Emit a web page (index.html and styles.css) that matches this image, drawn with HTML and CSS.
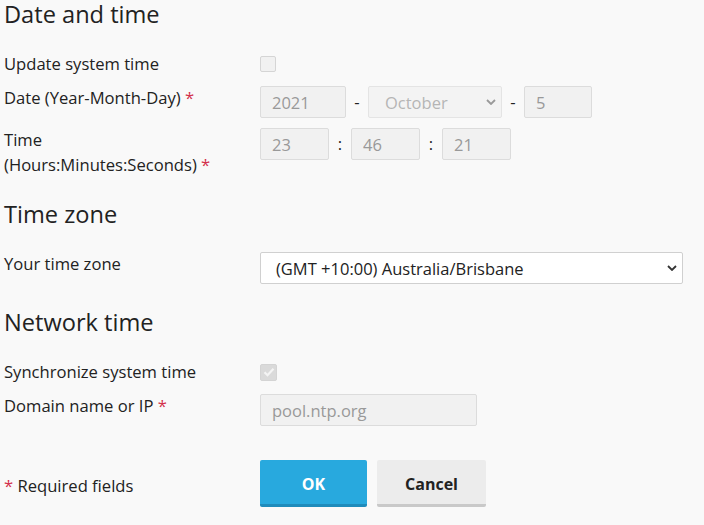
FILE: index.html
```html
<!DOCTYPE html>
<html lang="en">
<head>
<meta charset="utf-8">
<title>Date and time</title>
<link rel="stylesheet" href="styles.css">
</head>
<body>
<form class="page">
  <section class="section">
    <h2 class="section-title">Date and time</h2>
    <div class="row row-check">
      <div class="label">Update system time</div>
      <div class="field"><span class="checkbox"></span></div>
    </div>
    <div class="row">
      <div class="label">Date (Year-Month-Day) <span class="req">*</span></div>
      <div class="field">
        <input class="input w-year" type="text" value="2021" disabled>
        <span class="sep">-</span>
        <div class="select-wrap w-month">
          <select class="select" disabled><option>October</option></select>
          <svg class="chev chev-dis" width="10" height="6" viewBox="0 0 10 6"><path d="M1 1l4 4 4-4" fill="none" stroke="currentColor" stroke-width="1.8"/></svg>
        </div>
        <span class="sep">-</span>
        <input class="input w-day" type="text" value="5" disabled>
      </div>
    </div>
    <div class="row">
      <div class="label">Time<br>(Hours:Minutes:Seconds) <span class="req">*</span></div>
      <div class="field">
        <input class="input w-time" type="text" value="23" disabled>
        <span class="sep">:</span>
        <input class="input w-time" type="text" value="46" disabled>
        <span class="sep">:</span>
        <input class="input w-time" type="text" value="21" disabled>
      </div>
    </div>
  </section>
  <section class="section">
    <h2 class="section-title">Time zone</h2>
    <div class="row">
      <div class="label">Your time zone</div>
      <div class="field">
        <div class="select-wrap w-tz">
          <select class="select select-active"><option>(GMT +10:00) Australia/Brisbane</option></select>
          <svg class="chev" width="10" height="6" viewBox="0 0 10 6"><path d="M1 1l4 4 4-4" fill="none" stroke="currentColor" stroke-width="1.8"/></svg>
        </div>
      </div>
    </div>
  </section>
  <section class="section">
    <h2 class="section-title">Network time</h2>
    <div class="row row-check">
      <div class="label">Synchronize system time</div>
      <div class="field">
        <span class="checkbox checked">
          <svg width="12" height="10" viewBox="0 0 12 10"><path d="M1.5 5.2l3 3 6-6.5" fill="none" stroke="#f4f4f4" stroke-width="2.2"/></svg>
        </span>
      </div>
    </div>
    <div class="row">
      <div class="label">Domain name or IP <span class="req">*</span></div>
      <div class="field">
        <input class="input w-domain" type="text" value="pool.ntp.org" disabled>
      </div>
    </div>
  </section>
  <div class="row row-buttons">
    <div class="label"><span class="req">*</span> Required fields</div>
    <div class="field buttons">
      <button class="btn btn-primary" type="button">OK</button>
      <button class="btn btn-default" type="button">Cancel</button>
    </div>
  </div>
</form>
</body>
</html>
```
FILE: styles.css
```css
html, body {
  margin: 0;
  padding: 0;
  background: #f9f9f9;
}
body {
  font-family: "Open Sans", "Noto Sans", sans-serif;
  font-size: 16.6px;
  color: #222;
}
.page {
  padding: 0 4px;
}
.section {
  margin-bottom: 24px;
}
.section-title {
  margin: 0 0 24px;
  font-size: 23.6px;
  line-height: 28px;
  font-weight: 400;
  color: #222;
}
.row {
  display: grid;
  grid-template-columns: 256px 1fr;
  align-items: start;
  margin-bottom: 10px;
}
.section .row:last-child {
  margin-bottom: 0;
}
.label {
  line-height: 25px;
  margin-top: -1px;
  margin-bottom: -1px;
}
.row-check .label {
  margin-top: 0;
  margin-bottom: 0;
  line-height: 24px;
}
.row-check .field {
  height: 24px;
}
.req {
  color: #d3304b;
}
.field {
  display: flex;
  align-items: center;
}
.input, .select {
  box-sizing: border-box;
  height: 32px;
  border: 1px solid #dcdcdc;
  border-radius: 2px;
  background: #f1f1f1;
  font-family: inherit;
  font-size: 16.5px;
  color: #999;
  padding: 0 11px;
  margin: 0;
  outline: none;
}
.w-year { width: 86px; }
.w-day { width: 68px; }
.w-time { width: 69px; }
.w-domain { width: 217px; }
.sep {
  width: 22px;
  text-align: center;
  color: #222;
  line-height: 32px;
}
.select-wrap {
  position: relative;
  display: flex;
}
.w-month { width: 134px; }
.w-tz { width: 423px; }
.select {
  appearance: none;
  -webkit-appearance: none;
  width: 100%;
  padding: 0 30px 0 16px;
}
.select-active {
  background: #fff;
  border-color: #d0d0d0;
  color: #222;
  padding-left: 15px;
}
.chev {
  position: absolute;
  right: 6px;
  top: 13px;
  color: #333;
}
.chev-dis {
  color: #999;
}
.checkbox {
  box-sizing: border-box;
  width: 16px;
  height: 16px;
  border: 1px solid #d5d5d5;
  border-radius: 2px;
  background: #f1f1f1;
  display: flex;
  align-items: center;
  justify-content: center;
}
.checkbox.checked {
  width: 17px;
  height: 17px;
  background: #dadada;
  border-color: #d4d4d4;
}
.row-buttons {
  margin-top: 34px;
  align-items: center;
}
.row-buttons .label {
  margin: 0;
  padding-top: 3px;
}
.buttons {
  gap: 10px;
}
.btn {
  box-sizing: border-box;
  height: 47px;
  border: 0;
  border-radius: 2px;
  font-family: inherit;
  font-size: 16px;
  font-weight: 700;
  padding: 4px 0 0;
  cursor: pointer;
}
.btn-primary {
  width: 107px;
  background: #28a9de;
  color: #fff;
  border-bottom: 3px solid #1f8bbb;
}
.btn-default {
  width: 109px;
  background: #ececec;
  color: #222;
  border-bottom: 3px solid #c9c9c9;
}
```
